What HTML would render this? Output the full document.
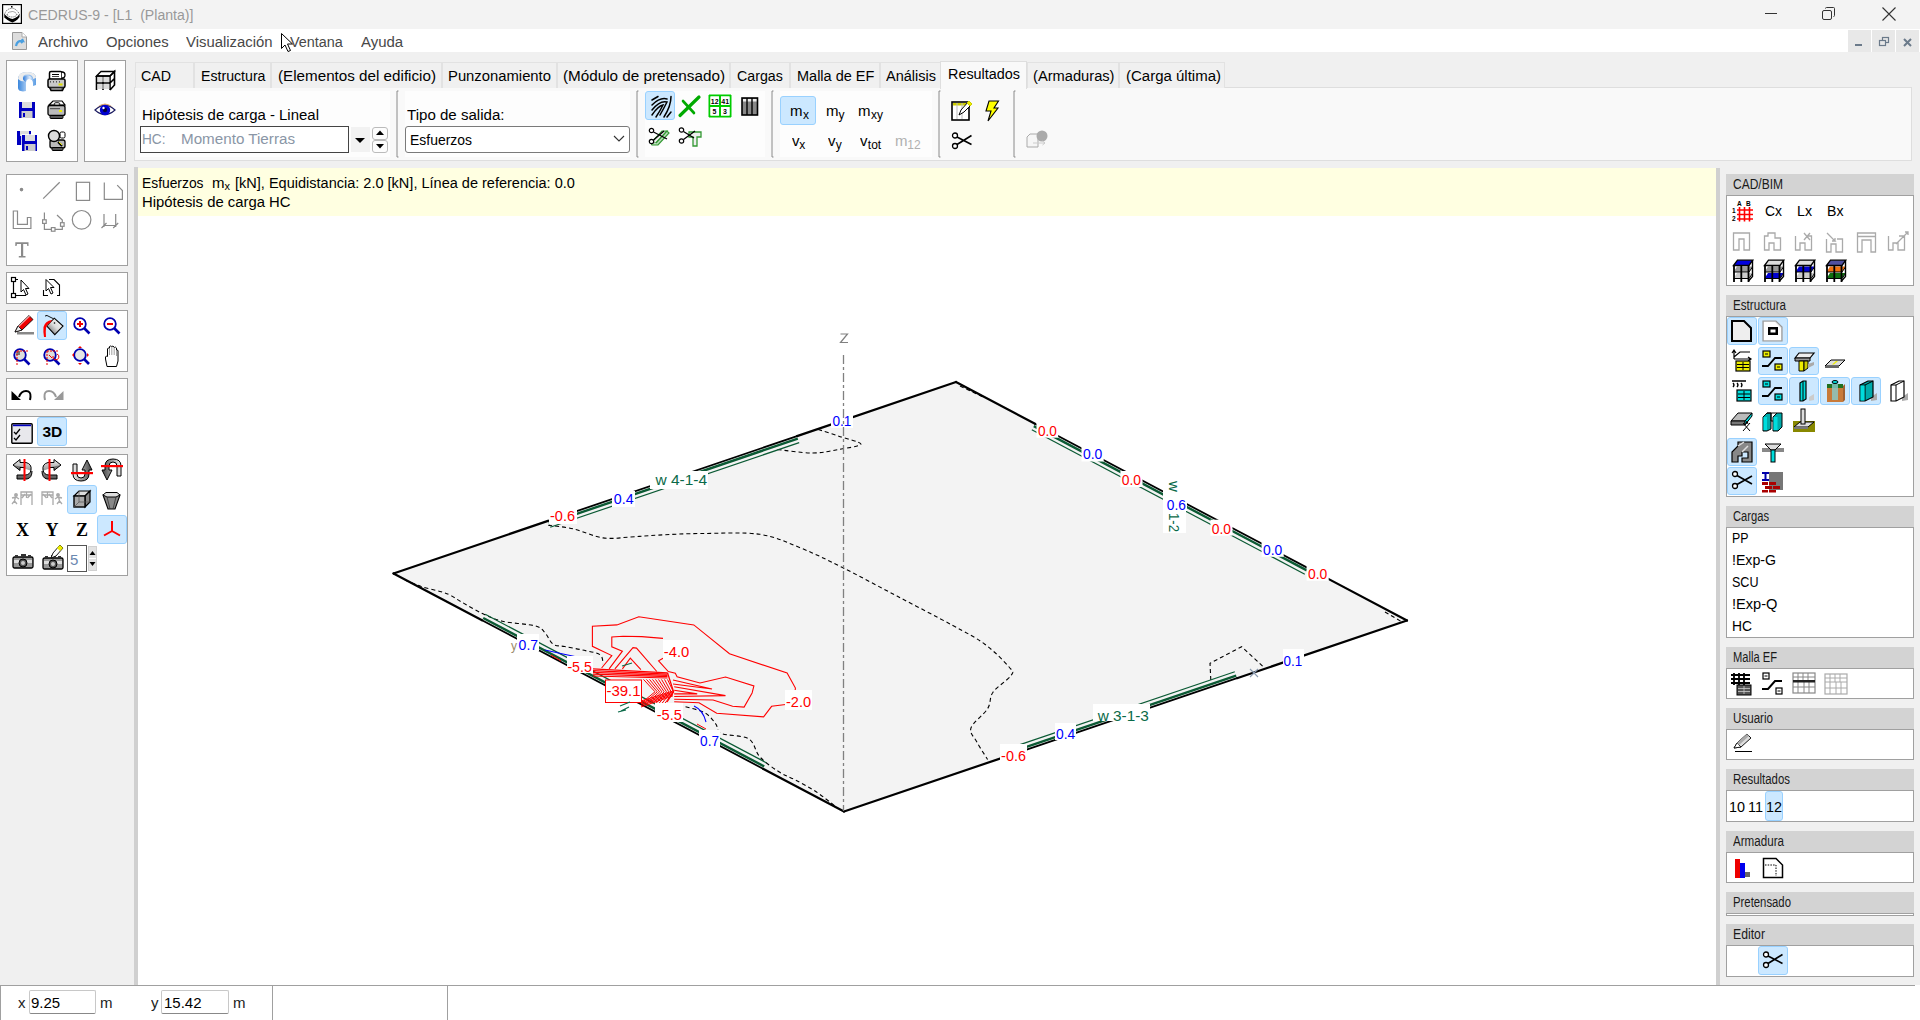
<!DOCTYPE html>
<html><head><meta charset="utf-8">
<style>
*{box-sizing:border-box;margin:0;padding:0}
html,body{width:1920px;height:1020px;overflow:hidden;background:#f0f0f0;font-family:"Liberation Sans",sans-serif;font-size:15px;color:#000}
.a{position:absolute}
.t{position:absolute;white-space:nowrap;line-height:1}
svg{overflow:visible}
</style></head><body>
<div class="a" style="left:0px;top:0px;width:1920px;height:29px;background:#f3f3f3"></div>
<svg class="a" style="left:2px;top:4px;" width="20" height="20" viewBox="0 0 20 20"><rect x="0.6" y="0.6" width="18.8" height="18.8" fill="#fff" stroke="#000" stroke-width="1.2"/>
<path d="M2.3 10 L4.5 12 L6.5 13.5 L8.5 14.5 L10.5 15 L13 14 L15.5 12.5 L17.5 10 L17.5 13 L15.5 15.5 L13.5 17 L10.5 18.5 L8 17.5 L5.5 16 L2.3 13.5 Z" fill="#000"/>
<g fill="none" stroke="#000" stroke-width="0.7" stroke-dasharray="1 1"><path d="M2.5 10.5 Q4 6 7 5 L10 4 Q15 5 17.5 10.5"/><path d="M5 11 Q6 8 8 8 L10.5 7.5 Q14 8 15 11 Q13 13 10 13 Q7 13 5 11Z"/></g>
<rect x="9" y="2" width="1.5" height="1.5" fill="#000"/></svg>
<div class="t" style="left:27.6px;top:6.88px;font-size:15.5px;color:#999;transform:scaleX(0.9104);transform-origin:0 0;">CEDRUS-9 - [L1&nbsp; (Planta)]</div>
<div class="a" style="left:1765px;top:13px;width:12px;height:1px;background:#333"></div>
<svg class="a" style="left:1822px;top:7px;" width="14" height="14" viewBox="0 0 14 14"><rect x="0.5" y="3.5" width="9" height="9" rx="1.5" fill="none" stroke="#333"/><path d="M3.5 1.5 Q3.5 0.5 4.5 0.5 L11.5 0.5 Q12.5 0.5 12.5 1.5 L12.5 8.5 Q12.5 9.5 11.5 9.5" fill="none" stroke="#333"/></svg>
<svg class="a" style="left:1882px;top:7px;" width="14" height="14" viewBox="0 0 14 14"><path d="M0.5 0.5 L13.5 13.5 M13.5 0.5 L0.5 13.5" stroke="#333" stroke-width="1.1"/></svg>
<div class="a" style="left:0px;top:29px;width:1920px;height:23px;background:#fff"></div>
<svg class="a" style="left:12px;top:32px;" width="15" height="18" viewBox="0 0 15 18"><path d="M0.5 0.5 L10 0.5 L14.5 5 L14.5 17.5 L0.5 17.5 Z" fill="#ddd" stroke="#999"/><path d="M10 0.5 L10 5 L14.5 5" fill="#fff" stroke="#aaa"/><path d="M4 14 Q5 8 11 9 L10 7 M11 9 L9 11" stroke="#4a9fe0" stroke-width="2.2" fill="none"/></svg>
<div class="t" style="left:38px;top:33.88px;font-size:15.5px;color:#484848;transform:scaleX(0.9674);transform-origin:0 0;">Archivo</div>
<div class="t" style="left:105.8px;top:33.88px;font-size:15.5px;color:#484848;transform:scaleX(0.9573);transform-origin:0 0;">Opciones</div>
<div class="t" style="left:185.8px;top:33.88px;font-size:15.5px;color:#484848;transform:scaleX(0.9602);transform-origin:0 0;">Visualización</div>
<div class="t" style="left:290.2px;top:33.88px;font-size:15.5px;color:#484848;transform:scaleX(0.9293);transform-origin:0 0;">Ventana</div>
<div class="t" style="left:360.8px;top:33.88px;font-size:15.5px;color:#484848;transform:scaleX(0.9660);transform-origin:0 0;">Ayuda</div>
<svg class="a" style="left:281px;top:33px;" width="13" height="20" viewBox="0 0 13 20"><path d="M0.5 0.5 L0.5 15.5 L4 12 L7 18.5 L9.5 17.5 L6.5 11 L11.5 11 Z" fill="#fff" stroke="#000" stroke-width="1"/></svg>
<div class="a" style="left:1848px;top:30px;width:23px;height:22px;background:#e8e8e8"></div>
<div class="a" style="left:1872px;top:30px;width:23px;height:22px;background:#e8e8e8"></div>
<div class="a" style="left:1896px;top:30px;width:23px;height:22px;background:#e8e8e8"></div>
<svg class="a" style="left:1855px;top:36px;" width="10" height="12" viewBox="0 0 10 12"><rect x="0" y="8" width="7" height="2" fill="#6b7a8a"/></svg>
<svg class="a" style="left:1879px;top:37px;" width="10" height="10" viewBox="0 0 10 10"><rect x="3.5" y="0.5" width="6" height="5" fill="none" stroke="#6b7a8a" stroke-width="1.2"/><rect x="0.5" y="3.5" width="6" height="5" fill="#e8e8e8" stroke="#6b7a8a" stroke-width="1.2"/></svg>
<svg class="a" style="left:1903px;top:38px;" width="9" height="9" viewBox="0 0 9 9"><path d="M1 1 L8 8 M8 1 L1 8" stroke="#6b7a8a" stroke-width="2"/></svg>
<div class="a" style="left:6px;top:60px;width:72px;height:102px;background:#fff;border:1px solid #a0a0a0"></div>
<div class="a" style="left:84px;top:60px;width:42px;height:102px;background:#fff;border:1px solid #a0a0a0"></div>
<svg class="a" style="left:17px;top:70px;" width="20" height="22" viewBox="0 0 20 22"><defs><linearGradient id="gA" x1="0" x2="1"><stop offset="0" stop-color="#2a78d8"/><stop offset="0.45" stop-color="#a8c8f0"/><stop offset="0.7" stop-color="#e0ecfa"/><stop offset="1" stop-color="#8ab8ee"/></linearGradient>
<linearGradient id="gA2" x1="0" x2="1"><stop offset="0" stop-color="#3a86dc"/><stop offset="0.5" stop-color="#b0d0f4"/><stop offset="1" stop-color="#5f9fe4"/></linearGradient></defs>
<path d="M1 10 L1 18 Q1 21 6 21.5 L9 21 L9 13 Q9 9 12 9 Q16 9 16 13 L16 16 L19 15 L19 8 Q19 2 10 2 Q1 2 1 10Z" fill="url(#gA2)"/>
<path d="M1 9 Q1 2 10 2 Q19 2 19 8 L16 9 Q16 4.5 10.5 4.5 Q5 4.5 6 9 Q7 11 9 11.5 Q4 12 1 9Z" fill="#ececec"/>
<path d="M6 8 Q7 5 11 5.5 Q15 6 16 9 L16 13 Q16 9 12 9 Q9 9 9 12 Q6 11 6 8Z" fill="url(#gA)"/></svg>
<svg class="a" style="left:47px;top:70px;" width="20" height="22" viewBox="0 0 20 22"><rect x="2.5" y="1.5" width="12.5" height="8" rx="1.5" fill="#fff" stroke="#000" stroke-width="1.5"/>
<rect x="5" y="4" width="7" height="1" fill="#000"/><rect x="5" y="6" width="7" height="1" fill="#444"/>
<path d="M15 2 Q18 2 18 5 Q18 8 15 8" fill="#fff" stroke="#000" stroke-width="1.3"/>
<rect x="1" y="9" width="17" height="8.5" rx="1.5" fill="#c8c8c8" stroke="#000" stroke-width="1.5"/>
<g fill="#555"><rect x="3" y="11" width="1" height="1.6"/><rect x="6" y="11" width="1" height="1.6"/><rect x="9" y="11" width="1" height="1.6"/><rect x="12" y="11" width="1" height="1.6"/></g><rect x="11.5" y="13.5" width="4" height="2" fill="#dd0"/>
<path d="M2.5 17.5 L4 20.5 L15.5 20.5 L17 17.5" fill="#444" stroke="#000" stroke-width="1.3"/><rect x="4.5" y="18.5" width="10" height="1" fill="#ccc"/></svg>
<svg class="a" style="left:18px;top:101px;" width="18" height="18" viewBox="0 0 18 18"><rect x="1" y="1" width="16" height="16" fill="#0000c0"/><rect x="4" y="1" width="10" height="6" fill="#ddd"/><rect x="3.5" y="10" width="11" height="7" fill="#ccc"/><rect x="5" y="12" width="2" height="4" fill="#0000c0"/></svg>
<svg class="a" style="left:47px;top:100px;" width="20" height="20" viewBox="0 0 20 20"><path d="M2 5 L6 1 L15 1 L18 5 Z" fill="#fff" stroke="#000" stroke-width="1.2"/><ellipse cx="10" cy="4" rx="3" ry="1.5" fill="#ddd" stroke="#000" stroke-width="0.8"/>
<rect x="1" y="5.5" width="17" height="10" rx="2" fill="#bbb" stroke="#000" stroke-width="1.3"/>
<rect x="3" y="8" width="10" height="1.2" fill="#555"/><rect x="12" y="10" width="3" height="2" fill="#ee0"/>
<rect x="3" y="15.5" width="13" height="3" rx="1" fill="#555" stroke="#000"/></svg>
<svg class="a" style="left:16px;top:130px;" width="22" height="22" viewBox="0 0 22 22"><rect x="1" y="1" width="14" height="14" fill="#0000c0"/><rect x="4" y="1" width="9" height="5" fill="#ddd"/><rect x="5.2" y="4.2" width="16.3" height="17.3" fill="#fff"/><rect x="6" y="5" width="15" height="16" fill="#0000c0"/><rect x="9" y="5" width="10" height="6" fill="#ddd"/><rect x="8.5" y="14" width="11" height="7" fill="#ccc"/><rect x="10" y="16" width="2" height="4" fill="#0000c0"/></svg>
<svg class="a" style="left:47px;top:130px;" width="20" height="22" viewBox="0 0 20 22"><rect x="3" y="10" width="15" height="8" rx="2" fill="#bbb" stroke="#000" stroke-width="1.3"/><rect x="5" y="17.5" width="11" height="3" rx="1" fill="#555" stroke="#000"/>
<rect x="13" y="2" width="5" height="6" rx="1.5" fill="#fff" stroke="#000"/>
<circle cx="7" cy="6" r="5.5" fill="#ddd" stroke="#000" stroke-width="1.4"/><path d="M11 12 L15 16" stroke="#000" stroke-width="2"/><path d="M12 12 L15 15" stroke="#ee0" stroke-width="1"/></svg>
<svg class="a" style="left:95px;top:70px;" width="21" height="22" viewBox="0 0 21 22"><path d="M1.5 6 L6 1.5 L19.5 1.5 L15 6 Z" fill="#fff" stroke="#000" stroke-width="1.3"/>
<path d="M1.5 6 L15 6 L15 20 M1.5 6 L1.5 20 M8 6 L8 20 M1.5 13 L15 13 M15 6 L19.5 1.5 L19.5 15 L15 20 M15 13 L19.5 8.5" fill="none" stroke="#000" stroke-width="1.6"/>
<rect x="2.5" y="7" width="12" height="5" fill="#ccc" opacity="0.7"/><rect x="2.5" y="14" width="12" height="5" fill="#ccc" opacity="0.7"/></svg>
<svg class="a" style="left:94px;top:101px;" width="22" height="18" viewBox="0 0 22 18"><path d="M1 9 Q11 -1 21 9 Q11 18 1 9 Z" fill="#fff" stroke="#1a1a60" stroke-width="1.2"/>
<path d="M3 6 Q11 -1 19 6 Q11 2 3 6Z" fill="#d9a36a"/>
<circle cx="11" cy="9" r="5.2" fill="#0000d0"/><circle cx="11" cy="9" r="2.2" fill="#000040"/><circle cx="9.5" cy="7" r="1.2" fill="#fff"/></svg>
<div class="a" style="left:6px;top:174px;width:122px;height:92px;background:#fff;border:1px solid #a0a0a0"></div>
<svg class="a" style="left:6px;top:174px;" width="122" height="92" viewBox="0 0 122 92"><g fill="none" stroke="#8a8a8a" stroke-width="1.2">
<circle cx="15.5" cy="15.6" r="1.2" fill="#8a8a8a"/>
<path d="M37.2 24.6 L53.7 8.3"/>
<rect x="70.4" y="8.3" width="13.2" height="18.1"/>
<path d="M98.3 8.5 L98.3 25.3 L116.4 25.3 L116.4 16.5 L111.2 11.1"/>
<path d="M7.3 37 L7.3 54.5 L24.9 54.5 L24.9 43.5 L21.4 43.5 L21.4 50.3 L11.5 50.3 L11.5 37 Z"/>
<path d="M38.4 38.4 L38.4 55.4 L56.3 55.4 L56.3 46 L51 41"/>
<rect x="36.6" y="45.8" width="3.6" height="3.6" fill="#fff"/><rect x="45.4" y="53.6" width="3.6" height="3.6" fill="#fff"/><rect x="54.5" y="48.7" width="3.6" height="3.6" fill="#fff"/>
<circle cx="75.6" cy="45.8" r="9.3"/>
<path d="M98 40 L98 53 M109.7 40 L109.7 53 M98 51.5 L109.7 51.5 M95.5 54 L100.5 49 M107.2 54 L112.2 49"/>
</g>
<path d="M9.3 68.3 L22.5 68.3 L22.5 72 L21.3 72 L21 70 L17.2 70 L17.2 82 L19.5 82 L19.5 83.6 L12.8 83.6 L12.8 82 L15 82 L15 70 L11 70 L10.5 72 L9.3 72 Z" fill="#8a8a8a"/></svg>
<div class="a" style="left:6px;top:272px;width:122px;height:32px;background:#fff;border:1px solid #a0a0a0"></div>
<svg class="a" style="left:11px;top:277px;" width="22" height="23" viewBox="0 0 22 23"><rect x="0.5" y="0.5" width="4" height="4" fill="#fff" stroke="#000" stroke-width="1.2"/><rect x="0.5" y="16.5" width="4" height="4" fill="#fff" stroke="#000" stroke-width="1.2"/>
<path d="M2.5 4.5 L2.5 16.5 M4.5 18.5 L15 18.5 M4.5 2.5 L7 2.5" stroke="#000" stroke-width="1.2"/>
<path d="M10 3 L10 15 L12.5 12.5 L15 18 L17 17 L14.5 11.5 L18 11.5 Z" fill="#fff" stroke="#000" stroke-width="1"/></svg>
<svg class="a" style="left:43px;top:279px;" width="20" height="18" viewBox="0 0 20 18"><path d="M6 0.5 L11 0.5 L16.5 6 L16.5 16.5 L14 16.5 M0.5 11 L0.5 16.5 L5 16.5" fill="none" stroke="#000" stroke-width="1.1"/>
<path d="M3 0.5 L3 12 L5.5 9.5 L8 15 L10 14 L7.5 8.5 L11 8.5 Z" fill="#fff" stroke="#000" stroke-width="1"/></svg>
<div class="a" style="left:6px;top:310px;width:122px;height:62px;background:#fff;border:1px solid #a0a0a0"></div>
<div class="a" style="left:37px;top:311px;width:30px;height:29px;background:#cce8ff;border:1px solid #99d1ff;border-radius:3px"></div>
<svg class="a" style="left:13px;top:315px;" width="21" height="20" viewBox="0 0 21 20"><path d="M2 17 L5 11 L16 0.5 L20 4.5 L9 15 Z" fill="#e00" stroke="#000" stroke-width="0.8"/><path d="M2 17 L5 11 L9 15 Z" fill="#eee" stroke="#000" stroke-width="0.8"/><path d="M5 11 L16 0.5 L17 1.5 L6 12Z" fill="#fff" opacity="0.6"/>
<rect x="4" y="17" width="17" height="2.5" fill="#888"/></svg>
<svg class="a" style="left:40px;top:314px;" width="26" height="26" viewBox="0 0 26 26"><defs><linearGradient id="gB" x1="0" x2="1" y1="1" y2="0"><stop offset="0" stop-color="#444"/><stop offset="0.5" stop-color="#ddd"/><stop offset="1" stop-color="#fff"/></linearGradient></defs>
<path d="M14.2 4.2 L23 12.1 L14.8 20.6 L6.6 11.8 Z" fill="url(#gB)" stroke="#000" stroke-width="1.1"/>
<path d="M6.6 11.8 Q8 8 10.5 6 L14.2 4.2" fill="none" stroke="#fff" stroke-width="0.5"/>
<path d="M5.7 2.5 Q5 1 7 1.5 L14 5" fill="none" stroke="#000" stroke-width="0.9"/><circle cx="14.5" cy="9" r="0.8" fill="#000"/>
<path d="M12 6 Q5 7 3.5 13 Q3 18 4 23 L6 23 Q5.5 18 6 14 Q7 10 10 9 Z" fill="#f00"/></svg>
<svg class="a" style="left:73px;top:317px;" width="18" height="18" viewBox="0 0 18 18"><circle cx="7" cy="7" r="5.8" fill="#fff" stroke="#0000b0" stroke-width="1.8"/><path d="M11 11 L16.5 16.5" stroke="#0000b0" stroke-width="2.6"/><path d="M4 7 L10 7 M7 4 L7 10" stroke="#e00" stroke-width="2"/></svg>
<svg class="a" style="left:103px;top:317px;" width="18" height="18" viewBox="0 0 18 18"><circle cx="7" cy="7" r="5.8" fill="#fff" stroke="#0000b0" stroke-width="1.8"/><path d="M11 11 L16.5 16.5" stroke="#0000b0" stroke-width="2.6"/><path d="M4 7 L10 7" stroke="#e00" stroke-width="2"/></svg>
<svg class="a" style="left:13px;top:348px;" width="18" height="18" viewBox="0 0 18 18"><circle cx="7" cy="7" r="5.8" fill="#ddd" stroke="#0000b0" stroke-width="1.8"/><path d="M7 7 L7 3 A4 4 0 0 0 3 7Z" fill="#777"/><path d="M11 11 L16.5 16.5" stroke="#0000b0" stroke-width="2.6"/><path d="M4 3 L4 17 M4 3 L16 3" stroke="#e00" stroke-width="1" stroke-dasharray="2 1"/></svg>
<svg class="a" style="left:43px;top:348px;" width="18" height="18" viewBox="0 0 18 18"><circle cx="7" cy="7" r="5.8" fill="#ddd" stroke="#0000b0" stroke-width="1.8"/><path d="M11 11 L16.5 16.5" stroke="#0000b0" stroke-width="2.6"/><path d="M4 3 L4 17 M4 3 L16 3" stroke="#e00" stroke-width="1" stroke-dasharray="2 1"/><path d="M6 7 L9 10 M14 6 A3 3 0 1 1 10 8" stroke="#e00" fill="none"/></svg>
<svg class="a" style="left:72px;top:346px;" width="18" height="20" viewBox="0 0 18 20"><circle cx="8" cy="9" r="5.8" fill="#e6e6e6" stroke="#0000b0" stroke-width="1.8"/><path d="M12 13 L17 18" stroke="#0000b0" stroke-width="2.6"/><path d="M8 0 L10 2 L6 2Z M8 19 L10 17 L6 17Z M0 9 L2 7 L2 11Z M17 9 L15 7 L15 11Z" fill="#e00"/></svg>
<svg class="a" style="left:104px;top:345px;" width="15" height="23" viewBox="0 0 15 23"><path d="M3 21.5 L1.5 14 Q1 11.5 2.5 11 L3.5 11.5 L3.5 4 Q4 2.5 5.5 3 L5.5 1.5 Q6.5 0.5 7.8 1.5 Q9 0.5 10 2 L10.3 2.5 Q11.5 1.5 12.5 3 L12.5 5 Q13.8 4.5 14 6 L14 16 L12.5 21.5 Z" fill="#fff" stroke="#000" stroke-width="1"/>
<path d="M5.5 3 L5.5 10 M7.8 1.5 L7.8 10 M10.2 2.5 L10.2 10 M12.5 5 L12.5 11" stroke="#888" stroke-width="0.8"/></svg>
<div class="a" style="left:6px;top:378px;width:122px;height:32px;background:#fff;border:1px solid #a0a0a0"></div>
<svg class="a" style="left:11px;top:388px;" width="22" height="13" viewBox="0 0 22 13"><path d="M8 9 Q10 3 15 3 Q20 3 19.5 9 L19 12" fill="none" stroke="#000" stroke-width="2"/><path d="M0.5 12 L0.5 3 L10 12 Z" fill="#000"/></svg>
<svg class="a" style="left:42px;top:388px;" width="22" height="13" viewBox="0 0 22 13"><path d="M14 9 Q12 3 7 3 Q2 3 2.5 9 L3 12" fill="none" stroke="#999" stroke-width="2"/><path d="M21.5 12 L21.5 3 L12 12 Z" fill="#999"/></svg>
<div class="a" style="left:6px;top:416px;width:122px;height:32px;background:#fff;border:1px solid #a0a0a0"></div>
<div class="a" style="left:37px;top:417px;width:30px;height:29px;background:#cce8ff;border:1px solid #99d1ff;border-radius:3px"></div>
<svg class="a" style="left:11px;top:423px;" width="22" height="21" viewBox="0 0 22 21"><rect x="0.8" y="0.8" width="20.4" height="19.4" rx="1" fill="#e8e8ec" stroke="#000" stroke-width="1.4"/><rect x="2" y="1.6" width="18" height="1.6" fill="#0000c0"/><path d="M3 9 L5 11 L9 6 M3 15 L5 17 L9 12" fill="none" stroke="#000" stroke-width="1.3"/></svg>
<div class="t" style="left:42.5px;top:424.38px;font-size:15.5px;color:#000;font-weight:bold">3D</div>
<div class="a" style="left:6px;top:454px;width:122px;height:122px;background:#fff;border:1px solid #a0a0a0"></div>
<svg class="a" style="left:12px;top:459px;" width="21" height="22" viewBox="0 0 21 22"><defs><linearGradient id="gR12459" x1="0" x2="0" y1="0" y2="1"><stop offset="0" stop-color="#eee"/><stop offset="1" stop-color="#555"/></linearGradient></defs><g >
<path d="M1 6 L8 0.5 L8 3.5 L14 3.5 Q20 5 19 11 Q18 16 13 16 L5 16 L5 20 L15 20 Q20 19 20 12" fill="url(#gR12459)" stroke="#000" stroke-width="1"/>
<path d="M1 6 L8 11.5 L8 8.5 L13 8.5" fill="#777" stroke="#000" stroke-width="1"/>
<rect x="11.5" y="0" width="2" height="22" fill="#f00"/></g></svg>
<svg class="a" style="left:41px;top:459px;" width="21" height="22" viewBox="0 0 21 22"><defs><linearGradient id="gR41459" x1="0" x2="0" y1="0" y2="1"><stop offset="0" stop-color="#eee"/><stop offset="1" stop-color="#555"/></linearGradient></defs><g transform="translate(21,0) scale(-1,1)">
<path d="M1 6 L8 0.5 L8 3.5 L14 3.5 Q20 5 19 11 Q18 16 13 16 L5 16 L5 20 L15 20 Q20 19 20 12" fill="url(#gR41459)" stroke="#000" stroke-width="1"/>
<path d="M1 6 L8 11.5 L8 8.5 L13 8.5" fill="#777" stroke="#000" stroke-width="1"/>
<rect x="11.5" y="0" width="2" height="22" fill="#f00"/></g></svg>
<svg class="a" style="left:71px;top:459px;" width="22" height="22" viewBox="0 0 22 22"><defs><linearGradient id="gU" x1="0" x2="1"><stop offset="0" stop-color="#eee"/><stop offset="1" stop-color="#444"/></linearGradient></defs>
<path d="M2 5 L6 5 L6 15 Q6 19 10 19 Q14 19 14 15 L14 11 L11 11 L16 1 L21 11 L18 11 L18 15 Q18 22 10 22 Q2 22 2 15 Z" fill="url(#gU)" stroke="#000" stroke-width="1"/>
<rect x="0" y="13" width="22" height="2.2" fill="#f00"/></svg>
<svg class="a" style="left:101px;top:459px;" width="22" height="22" viewBox="0 0 22 22"><defs><linearGradient id="gV" x1="0" x2="1"><stop offset="0" stop-color="#444"/><stop offset="1" stop-color="#eee"/></linearGradient></defs>
<path d="M20 17 L16 17 L16 7 Q16 3 12 3 Q8 3 8 7 L8 11 L11 11 L6 21 L1 11 L4 11 L4 7 Q4 0 12 0 Q20 0 20 7 Z" fill="url(#gV)" stroke="#000" stroke-width="1"/>
<rect x="0" y="6" width="22" height="2.2" fill="#f00"/></svg>
<svg class="a" style="left:11px;top:490px;" width="22" height="16" viewBox="0 0 22 16"><g stroke="#aaa" fill="none" stroke-width="1.3"><path d="M10 15 L10 2 L21 2 L21 15 M10 5 L21 5 M15.5 2 L15.5 8 M11 8 L14 4 M16.5 8 L20 4"/><circle cx="5" cy="5" r="1.3" fill="#aaa"/><path d="M4.5 7 L3.5 11 L1 14 M3.5 11 L6 14 M1 8 L5 7 L8 9"/></g></svg>
<svg class="a" style="left:41px;top:490px;" width="22" height="16" viewBox="0 0 22 16"><g stroke="#aaa" fill="none" stroke-width="1.3" transform="translate(22,0) scale(-1,1)"><path d="M10 15 L10 2 L21 2 L21 15 M10 5 L21 5 M15.5 2 L15.5 8 M11 8 L14 4 M16.5 8 L20 4"/><circle cx="5" cy="5" r="1.3" fill="#aaa"/><path d="M4.5 7 L3.5 11 L1 14 M3.5 11 L6 14 M1 8 L5 7 L8 9"/></g></svg>
<div class="a" style="left:67px;top:485px;width:30px;height:29px;background:#cce8ff;border:1px solid #99d1ff;border-radius:3px"></div>
<svg class="a" style="left:73px;top:490px;" width="18" height="18" viewBox="0 0 18 18"><path d="M1 6 L6 1 L17 1 L12 6 Z" fill="#ddd" stroke="#000" stroke-width="1.2"/><path d="M12 6 L17 1 L17 12 L12 17Z" fill="#888" stroke="#000" stroke-width="1.2"/><rect x="1" y="6" width="11" height="11" fill="#aaa" stroke="#000" stroke-width="1.4"/><path d="M1 17 L6 12 L17 12 M6 12 L6 1" stroke="#555" stroke-width="0.7" fill="none"/></svg>
<svg class="a" style="left:102px;top:492px;" width="19" height="18" viewBox="0 0 19 18"><path d="M1 3 L18 3 L13 17 L6 17 Z" fill="#888" stroke="#000" stroke-width="1.1"/><path d="M1 3 L4 0.5 L15 0.5 L18 3 L14 5 L5 5Z" fill="#ddd" stroke="#000" stroke-width="1"/><path d="M5 5 L8 17 M14 5 L11 17" stroke="#333" stroke-width="0.8"/></svg>
<div class="t" style="left:16px;top:520.76px;font-size:18px;color:#000;font-family:'Liberation Serif',serif;font-weight:bold">X</div>
<div class="t" style="left:45.5px;top:520.76px;font-size:18px;color:#000;font-family:'Liberation Serif',serif;font-weight:bold">Y</div>
<div class="t" style="left:76px;top:520.76px;font-size:18px;color:#000;font-family:'Liberation Serif',serif;font-weight:bold">Z</div>
<div class="a" style="left:97px;top:515px;width:30px;height:29px;background:#cce8ff;border:1px solid #99d1ff;border-radius:3px"></div>
<svg class="a" style="left:103px;top:520px;" width="18" height="18" viewBox="0 0 18 18"><path d="M9 1 L9 11 L1 15.5 M9 11 L17 15.5" stroke="#f00" stroke-width="2" fill="none"/></svg>
<svg class="a" style="left:12px;top:553px;" width="22" height="16" viewBox="0 0 22 16"><rect x="1" y="4" width="20" height="11" rx="1.5" fill="#999" stroke="#000" stroke-width="1.3"/><rect x="3" y="2" width="3" height="2" fill="#333"/><rect x="9" y="1" width="5" height="3" fill="#333"/><rect x="16" y="2" width="3" height="2" fill="#333"/><rect x="2" y="7" width="18" height="3" fill="#ddd"/><circle cx="11" cy="10" r="4" fill="#555" stroke="#000"/><circle cx="11" cy="10" r="2" fill="#ccc"/></svg>
<svg class="a" style="left:42px;top:554px;" width="22" height="16" viewBox="0 0 22 16"><rect x="1" y="4" width="20" height="11" rx="1.5" fill="#999" stroke="#000" stroke-width="1.3"/><rect x="3" y="2" width="3" height="2" fill="#333"/><rect x="9" y="1" width="5" height="3" fill="#333"/><rect x="16" y="2" width="3" height="2" fill="#333"/><rect x="2" y="7" width="18" height="3" fill="#ddd"/><circle cx="11" cy="10" r="4" fill="#555" stroke="#000"/><circle cx="11" cy="10" r="2" fill="#ccc"/></svg>
<svg class="a" style="left:49px;top:544px;" width="14" height="16" viewBox="0 0 14 16"><path d="M2 14 L4 9 L11 1 L14 4 L7 12 Z" fill="#fff" stroke="#000" stroke-width="0.9"/><path d="M8 4 L11 1 L14 4 L11 7Z" fill="#ee0"/></svg>
<div class="a" style="left:67px;top:545px;width:20px;height:27px;background:#fff;border:1px solid #555"></div>
<div class="t" style="left:70px;top:551.88px;font-size:15.5px;color:#6a88b0;transform:scaleX(0.9674);transform-origin:0 0;">5</div>
<div class="a" style="left:88px;top:546px;width:9px;height:25px;background:#e2e2e2;border:1px solid #d0d0d0"></div>
<svg class="a" style="left:88px;top:546px;" width="9" height="25" viewBox="0 0 9 25"><path d="M1.5 9 L4.5 5 L7.5 9Z M1.5 16 L4.5 20 L7.5 16Z" fill="#000"/><path d="M1 12.5 L8 12.5" stroke="#fff"/></svg>
<div class="a" style="left:134px;top:167px;width:4px;height:818px;background:#d0d0d0"></div>
<div class="a" style="left:134px;top:87px;width:1778px;height:74px;background:#f9f9f9;border:1px solid #dedede"></div>
<div class="a" style="left:135px;top:62px;width:59px;height:26px;background:#f0f0f0;border:1px solid #e2e2e2;border-bottom:none"></div>
<div class="t" style="left:141px;top:67.88px;font-size:15.5px;color:#000;transform:scaleX(0.9169);transform-origin:0 0;">CAD</div>
<div class="a" style="left:194px;top:62px;width:77px;height:26px;background:#f0f0f0;border:1px solid #e2e2e2;border-bottom:none"></div>
<div class="t" style="left:201.2px;top:67.88px;font-size:15.5px;color:#000;transform:scaleX(0.9129);transform-origin:0 0;">Estructura</div>
<div class="a" style="left:271px;top:62px;width:170.5px;height:26px;background:#f0f0f0;border:1px solid #e2e2e2;border-bottom:none"></div>
<div class="t" style="left:278px;top:67.88px;font-size:15.5px;color:#000;transform:scaleX(0.9806);transform-origin:0 0;">(Elementos del edificio)</div>
<div class="a" style="left:441.5px;top:62px;width:115.0px;height:26px;background:#f0f0f0;border:1px solid #e2e2e2;border-bottom:none"></div>
<div class="t" style="left:447.8px;top:67.88px;font-size:15.5px;color:#000;transform:scaleX(0.9559);transform-origin:0 0;">Punzonamiento</div>
<div class="a" style="left:556.5px;top:62px;width:173.5px;height:26px;background:#f0f0f0;border:1px solid #e2e2e2;border-bottom:none"></div>
<div class="t" style="left:563px;top:67.88px;font-size:15.5px;color:#000;transform:scaleX(0.9841);transform-origin:0 0;">(Módulo de pretensado)</div>
<div class="a" style="left:730px;top:62px;width:60px;height:26px;background:#f0f0f0;border:1px solid #e2e2e2;border-bottom:none"></div>
<div class="t" style="left:736.8px;top:67.88px;font-size:15.5px;color:#000;transform:scaleX(0.9166);transform-origin:0 0;">Cargas</div>
<div class="a" style="left:790px;top:62px;width:89.5px;height:26px;background:#f0f0f0;border:1px solid #e2e2e2;border-bottom:none"></div>
<div class="t" style="left:796.5px;top:67.88px;font-size:15.5px;color:#000;transform:scaleX(0.9357);transform-origin:0 0;">Malla de EF</div>
<div class="a" style="left:879.5px;top:62px;width:61.0px;height:26px;background:#f0f0f0;border:1px solid #e2e2e2;border-bottom:none"></div>
<div class="t" style="left:886.2px;top:67.88px;font-size:15.5px;color:#000;transform:scaleX(0.9362);transform-origin:0 0;">Análisis</div>
<div class="a" style="left:1027px;top:62px;width:92px;height:26px;background:#f0f0f0;border:1px solid #e2e2e2;border-bottom:none"></div>
<div class="t" style="left:1032.5px;top:67.88px;font-size:15.5px;color:#000;transform:scaleX(0.9463);transform-origin:0 0;">(Armaduras)</div>
<div class="a" style="left:1119px;top:62px;width:105.5px;height:26px;background:#f0f0f0;border:1px solid #e2e2e2;border-bottom:none"></div>
<div class="t" style="left:1126px;top:67.88px;font-size:15.5px;color:#000;transform:scaleX(0.9675);transform-origin:0 0;">(Carga última)</div>
<div class="a" style="left:940px;top:61px;width:87px;height:28px;background:#f9f9f9;border:1px solid #dedede;border-bottom:none"></div>
<div class="t" style="left:948px;top:66.48px;font-size:15.5px;color:#000;transform:scaleX(0.9283);transform-origin:0 0;">Resultados</div>
<div class="a" style="left:140px;top:91px;width:250px;height:66px;background:#fdfdfd"></div>
<div class="a" style="left:405px;top:91px;width:225px;height:66px;background:#fdfdfd"></div>
<div class="a" style="left:645px;top:91px;width:119.5px;height:66px;background:#fdfdfd"></div>
<div class="a" style="left:780px;top:91px;width:152px;height:66px;background:#fdfdfd"></div>
<svg class="a" style="left:395.5px;top:90px;" width="4" height="68" viewBox="0 0 4 68"><path d="M2.5 1 L1 1 L1 67 L2.5 67" fill="none" stroke="#8a8a8a" stroke-width="1"/></svg>
<svg class="a" style="left:635.5px;top:90px;" width="4" height="68" viewBox="0 0 4 68"><path d="M2.5 1 L1 1 L1 67 L2.5 67" fill="none" stroke="#8a8a8a" stroke-width="1"/></svg>
<svg class="a" style="left:770.5px;top:90px;" width="4" height="68" viewBox="0 0 4 68"><path d="M2.5 1 L1 1 L1 67 L2.5 67" fill="none" stroke="#8a8a8a" stroke-width="1"/></svg>
<svg class="a" style="left:937.5px;top:90px;" width="4" height="68" viewBox="0 0 4 68"><path d="M2.5 1 L1 1 L1 67 L2.5 67" fill="none" stroke="#8a8a8a" stroke-width="1"/></svg>
<svg class="a" style="left:1012.5px;top:90px;" width="4" height="68" viewBox="0 0 4 68"><path d="M2.5 1 L1 1 L1 67 L2.5 67" fill="none" stroke="#8a8a8a" stroke-width="1"/></svg>
<div class="t" style="left:141.5px;top:106.88px;font-size:15.5px;color:#000;transform:scaleX(0.9642);transform-origin:0 0;">Hipótesis de carga - Lineal</div>
<div class="a" style="left:140px;top:126px;width:209px;height:27px;background:#fff;border:1px solid #444"></div>
<div class="t" style="left:142.3px;top:131.38px;font-size:15.5px;color:#8a96a6;transform:scaleX(0.8806);transform-origin:0 0;">HC:</div>
<div class="t" style="left:181px;top:131.38px;font-size:15.5px;color:#8a96a6;transform:scaleX(0.9802);transform-origin:0 0;">Momento Tierras</div>
<div class="a" style="left:351px;top:127px;width:19px;height:25px;background:#f2f2f2"></div>
<svg class="a" style="left:355px;top:138px;" width="10" height="6" viewBox="0 0 10 6"><path d="M0 0 L10 0 L5 5Z" fill="#000"/></svg>
<div class="a" style="left:371.5px;top:126.5px;width:16px;height:13px;background:#fdfdfd;border:1px solid #bbb;border-radius:3px"></div>
<div class="a" style="left:371.5px;top:140px;width:16px;height:13px;background:#fdfdfd;border:1px solid #bbb;border-radius:3px"></div>
<svg class="a" style="left:375px;top:129px;" width="10" height="7" viewBox="0 0 10 7"><path d="M1 6 L5 1.5 L9 6Z" fill="#000"/></svg>
<svg class="a" style="left:375px;top:143px;" width="10" height="7" viewBox="0 0 10 7"><path d="M1 1 L5 5.5 L9 1Z" fill="#000"/></svg>
<div class="t" style="left:407px;top:106.88px;font-size:15.5px;color:#000;transform:scaleX(0.9724);transform-origin:0 0;">Tipo de salida:</div>
<div class="a" style="left:405px;top:126px;width:225px;height:27px;background:#fff;border:1px solid #7a7a7a;border-radius:3px"></div>
<div class="t" style="left:410.3px;top:131.88px;font-size:15.5px;color:#000;transform:scaleX(0.8994);transform-origin:0 0;">Esfuerzos</div>
<svg class="a" style="left:613px;top:135px;" width="12" height="8" viewBox="0 0 12 8"><path d="M1 1 L6 6 L11 1" fill="none" stroke="#333" stroke-width="1.1"/></svg>
<div class="a" style="left:645px;top:91px;width:30px;height:29px;background:#cce8ff;border:1px solid #99d1ff;border-radius:3px"></div>
<svg class="a" style="left:648px;top:94px;" width="25" height="25" viewBox="0 0 25 25"><g fill="none" stroke="#000" stroke-width="1.5" stroke-linecap="round">
<path d="M4 6 L10 2.5"/><path d="M4 11 Q12 3 19 5"/><path d="M4 16 Q12 6 19 8 Q16 14 12 21"/>
<path d="M4 21 Q10 12 15 11 Q12 17 8 23"/><path d="M23 2.5 Q23 12 16 23"/><path d="M19 23 L23 18"/></g></svg>
<svg class="a" style="left:678px;top:95px;" width="23" height="22" viewBox="0 0 23 22"><path d="M2 20.5 L21 2" stroke="#0a0" stroke-width="3.2" stroke-linecap="round"/><path d="M5 6 L16 18" stroke="#0a0" stroke-width="2.6" stroke-linecap="round"/></svg>
<svg class="a" style="left:708px;top:94px;" width="24" height="24" viewBox="0 0 24 24"><g stroke="#0c0" stroke-width="2"><path d="M1 1.5 L23 1.5 M1 12 L23 12 M1 22.5 L23 22.5 M1.5 1 L1.5 23 M12 1 L12 23 M22.5 1 L22.5 23"/></g>
<rect x="2.5" y="2.5" width="8.5" height="8.5" fill="#fff"/><rect x="13" y="2.5" width="8.5" height="8.5" fill="#fff"/><rect x="2.5" y="13" width="8.5" height="8.5" fill="#fff"/><rect x="13" y="13" width="8.5" height="8.5" fill="#fff"/>
<g font-family="Liberation Sans" font-weight="bold" font-size="7" fill="#000"><text x="2.8" y="9.5">12</text><text x="13.3" y="9.5">41</text><text x="4.5" y="20">5</text><text x="15" y="20">3</text></g></svg>
<svg class="a" style="left:741px;top:97px;" width="18" height="19" viewBox="0 0 18 19"><rect x="1" y="1" width="15.5" height="17" fill="#888" stroke="#000" stroke-width="1.6"/><rect x="2" y="2" width="13.5" height="2.5" fill="#eee"/><path d="M6 1 L6 18 M11 1 L11 18" stroke="#000" stroke-width="1.4"/></svg>
<svg class="a" style="left:648px;top:127px;" width="25" height="22" viewBox="0 0 25 22"><path d="M3 16 L14 4 L19 4 L8 16 Z" fill="#eee" stroke="#393" stroke-width="1.2"/><path d="M8 16 L19 4 L21 6 L10 18 L4 18 L3 16" fill="#bdb" stroke="#393" stroke-width="1.2"/>
<circle cx="3.5" cy="3.5" r="2.2" fill="#fff" stroke="#000" stroke-width="1.2"/><circle cx="3.5" cy="14.5" r="2.2" fill="#fff" stroke="#000" stroke-width="1.2"/>
<path d="M5.5 5 L19 12 M5.5 13 L16 4" stroke="#000" stroke-width="1.3"/></svg>
<svg class="a" style="left:678px;top:127px;" width="25" height="21" viewBox="0 0 25 21"><path d="M11 5 L23 5 L23 10 L19 10 L19 19 L15 19 L15 10 L11 10 Z" fill="#eee" stroke="#393" stroke-width="1.3"/>
<circle cx="3.5" cy="3" r="2.2" fill="#fff" stroke="#000" stroke-width="1.2"/><circle cx="3.5" cy="14" r="2.2" fill="#fff" stroke="#000" stroke-width="1.2"/>
<path d="M5.5 4.5 L16 11 M5.5 12.5 L17 4" stroke="#000" stroke-width="1.3"/></svg>
<div class="a" style="left:780px;top:96px;width:36px;height:29px;background:#cce8ff;border:1px solid #99d1ff;border-radius:3px"></div>
<div class="t" style="left:790.3px;top:102.68px;font-size:15.5px;color:#000;transform:scaleX(0.9685);transform-origin:0 0;">m</div>
<div class="t" style="left:803.0999999999999px;top:108.64px;font-size:12px;color:#000;">x</div>
<div class="t" style="left:825.6px;top:102.68px;font-size:15.5px;color:#000;transform:scaleX(0.9685);transform-origin:0 0;">m</div>
<div class="t" style="left:838.4px;top:108.64px;font-size:12px;color:#000;">y</div>
<div class="t" style="left:858.3px;top:102.68px;font-size:15.5px;color:#000;transform:scaleX(0.9685);transform-origin:0 0;">m</div>
<div class="t" style="left:871.0999999999999px;top:108.64px;font-size:12px;color:#000;">xy</div>
<div class="t" style="left:791.5px;top:132.68px;font-size:15.5px;color:#000;transform:scaleX(0.9677);transform-origin:0 0;">v</div>
<div class="t" style="left:799.3px;top:138.64px;font-size:12px;color:#000;">x</div>
<div class="t" style="left:828px;top:132.68px;font-size:15.5px;color:#000;transform:scaleX(0.9677);transform-origin:0 0;">v</div>
<div class="t" style="left:835.8px;top:138.64px;font-size:12px;color:#000;">y</div>
<div class="t" style="left:860px;top:132.68px;font-size:15.5px;color:#000;transform:scaleX(0.9677);transform-origin:0 0;">v</div>
<div class="t" style="left:867.8px;top:138.64px;font-size:12px;color:#000;">tot</div>
<div class="t" style="left:894.5px;top:132.68px;font-size:15.5px;color:#b0b0b0;transform:scaleX(0.9685);transform-origin:0 0;">m</div>
<div class="t" style="left:907.3px;top:138.64px;font-size:12px;color:#b0b0b0;">12</div>
<svg class="a" style="left:951px;top:98px;" width="23" height="24" viewBox="0 0 23 24"><rect x="1" y="4" width="17" height="18" fill="#fff" stroke="#000" stroke-width="1.6"/><rect x="2" y="5" width="15" height="2.5" fill="#cc0"/>
<path d="M6 5 L6 21 M11 5 L11 21" stroke="#bbb" stroke-width="1"/><path d="M8 17 L10 12 L18 3 L21 6 L13 14Z" fill="#fff" stroke="#000" stroke-width="1"/><path d="M16 5 L18 3 L21 6 L19 8Z" fill="#ee0" stroke="#cc0"/></svg>
<svg class="a" style="left:984px;top:100px;" width="16" height="22" viewBox="0 0 16 22"><path d="M5 1 L14.5 1 L10 8 L14 8 L4 21 L7 11 L2 11 Z" fill="#ff0" stroke="#000" stroke-width="1.1"/></svg>
<svg class="a" style="left:951px;top:132px;" width="22" height="18" viewBox="0 0 22 18"><circle cx="4" cy="3.5" r="2.5" fill="#fff" stroke="#000" stroke-width="1.3"/><circle cx="4" cy="14" r="2.5" fill="#fff" stroke="#000" stroke-width="1.3"/><path d="M6 5 L20.5 12.5 M6 12.5 L20.5 3.5" stroke="#000" stroke-width="1.6"/></svg>
<svg class="a" style="left:1026px;top:130px;" width="23" height="22" viewBox="0 0 23 22"><path d="M1 7 L4 4 L12 4 L12 17 L1 17 Z" fill="#f6f6f6" stroke="#aaa" stroke-width="1"/><circle cx="16" cy="6" r="5.5" fill="#aaa"/><path d="M7 13 L19 13 M16.5 11 L19 13 L16.5 15" stroke="#ccc" fill="none"/></svg>
<div class="a" style="left:138px;top:168px;width:1578px;height:817px;background:#fff"></div>
<div class="a" style="left:138px;top:168px;width:1578px;height:48px;background:#ffffe1"></div>
<div class="a" style="left:1716px;top:168px;width:4px;height:817px;background:#d0d0d0"></div>
<div class="t" style="left:142.2px;top:174.88px;font-size:15.5px;color:#000;transform:scaleX(0.8921);transform-origin:0 0;">Esfuerzos</div>
<div class="t" style="left:212px;top:174.88px;font-size:15.5px;color:#000;transform:scaleX(0.9685);transform-origin:0 0;">m</div>
<div class="t" style="left:224.5px;top:181.49px;font-size:11px;color:#000;">x</div>
<div class="t" style="left:235.3px;top:174.88px;font-size:15.5px;color:#000;transform:scaleX(0.9369);transform-origin:0 0;">[kN], Equidistancia: 2.0 [kN], Línea de referencia: 0.0</div>
<div class="t" style="left:142.2px;top:194.48px;font-size:15.5px;color:#000;transform:scaleX(0.9575);transform-origin:0 0;">Hipótesis de carga HC</div>
<svg class="a" style="left:0px;top:0px;" width="1920" height="1020" viewBox="0 0 1920 1020"><polygon points="393.5,573.5 956.0,382.0 1407.0,620.5 844.0,811.5" fill="#f3f3f3"/><path d="M840.5 334 L847.5 334 L840.5 342.5 L848 342.5" fill="none" stroke="#808080" stroke-width="1.2"/><path d="M548.2 525.3 C552.3 525.9 563.9 526.7 573.0 528.8 C582.1 530.9 593.4 536.5 603.0 537.9 C612.6 539.3 621.4 537.5 630.6 537.0 C639.8 536.5 646.1 535.7 658.0 535.1 C669.9 534.5 685.0 533.6 702.0 533.5 C719.0 533.4 743.2 531.9 759.7 534.3 C776.2 536.7 787.1 542.5 800.8 548.0 C814.5 553.5 826.0 559.3 842.0 567.3 C858.0 575.3 878.7 586.5 897.0 596.1 C915.3 605.7 937.3 617.0 951.9 625.0 C966.5 633.0 975.2 637.1 984.8 644.2 C994.4 651.3 1005.1 662.2 1009.5 667.5 C1013.9 672.8 1013.6 671.6 1010.9 675.7 C1008.1 679.8 996.9 686.7 993.0 692.2 C989.1 697.7 991.3 702.8 987.6 708.7 C983.9 714.7 972.8 722.4 971.0 727.9 C969.2 733.4 973.8 736.3 976.6 741.6 C979.4 746.9 985.8 756.5 987.6 759.5" fill="none" stroke="#000" stroke-width="1.1" stroke-dasharray="4 3"/><path d="M405.0 580.0 C407.7 581.1 415.2 584.5 421.2 586.5 C427.2 588.5 436.3 590.3 441.2 591.8 C446.1 593.3 447.3 593.6 450.6 595.3 C453.9 597.0 455.9 598.8 461.2 601.8 C466.5 604.8 475.5 610.3 482.4 613.5 C489.3 616.7 493.6 619.1 502.4 621.2 C511.2 623.3 528.2 624.0 535.3 625.9 C542.3 627.8 541.8 629.4 544.7 632.4 C547.7 635.4 549.7 641.8 553.0 644.1 C556.3 646.5 559.8 645.5 564.7 646.5 C569.6 647.5 576.5 648.6 582.4 650.0 C588.3 651.4 596.6 652.4 600.0 654.7 C603.4 657.0 602.5 662.5 603.0 664.0" fill="none" stroke="#000" stroke-width="1.1" stroke-dasharray="4 3"/><path d="M672.0 704.0 C673.8 704.3 677.3 704.5 682.8 706.0 C688.2 707.5 699.2 709.8 704.7 712.8 C710.2 715.8 713.0 720.4 715.7 723.8 C718.5 727.2 715.7 730.9 721.2 733.4 C726.7 735.9 742.3 735.0 748.7 738.9 C755.1 742.8 754.7 751.2 759.7 756.7 C764.7 762.2 773.0 767.9 778.9 771.8 C784.8 775.7 789.3 776.8 795.3 780.0 C801.3 783.2 808.4 786.7 815.0 791.0 C821.6 795.3 831.7 803.5 835.0 806.0" fill="none" stroke="#000" stroke-width="1.1" stroke-dasharray="4 3"/><path d="M818.2 429.4 C821.6 430.5 831.7 433.8 838.8 436.2 C845.9 438.6 860.9 441.9 860.9 444.1 C860.9 446.3 846.9 447.9 838.8 449.4 C830.7 450.9 822.7 453.0 812.4 453.0 C802.1 453.0 782.9 450.0 777.0 449.4" fill="none" stroke="#000" stroke-width="1.1" stroke-dasharray="4 3"/><polyline points="1210.8,680.0 1210.0,663.3 1241.7,646.7 1263.3,666.7" fill="none" stroke="#000" stroke-width="1.1" stroke-dasharray="4 3"/><polyline points="960,386 985,398" fill="none" stroke="#000" stroke-width="1.1" stroke-dasharray="4 3"/><polyline points="1385,612 1402,622" fill="none" stroke="#000" stroke-width="1.1" stroke-dasharray="4 3"/><line x1="393.5" y1="573.5" x2="548.0" y2="520.9" stroke="#000" stroke-width="2.2" stroke-linecap="round"/><line x1="548.0" y1="520.9" x2="797.0" y2="436.1" stroke="#000" stroke-width="1.8" stroke-linecap="round"/><line x1="797.0" y1="436.1" x2="956.0" y2="382.0" stroke="#000" stroke-width="2.2" stroke-linecap="round"/><line x1="956.0" y1="382.0" x2="1035.0" y2="423.8" stroke="#000" stroke-width="2.2" stroke-linecap="round"/><line x1="1035.0" y1="423.8" x2="1308.0" y2="568.1" stroke="#000" stroke-width="1.8" stroke-linecap="round"/><line x1="1308.0" y1="568.1" x2="1407.0" y2="620.5" stroke="#000" stroke-width="2.2" stroke-linecap="round"/><line x1="844.0" y1="811.5" x2="1020.0" y2="751.8" stroke="#000" stroke-width="2.2" stroke-linecap="round"/><line x1="1020.0" y1="751.8" x2="1237.0" y2="678.2" stroke="#000" stroke-width="1.8" stroke-linecap="round"/><line x1="1237.0" y1="678.2" x2="1407.0" y2="620.5" stroke="#000" stroke-width="2.2" stroke-linecap="round"/><line x1="393.5" y1="573.5" x2="482.0" y2="620.3" stroke="#000" stroke-width="2.2" stroke-linecap="round"/><line x1="482.0" y1="620.3" x2="763.0" y2="768.7" stroke="#000" stroke-width="1.8" stroke-linecap="round"/><line x1="763.0" y1="768.7" x2="844.0" y2="811.5" stroke="#000" stroke-width="2.2" stroke-linecap="round"/><polygon points="393.5,573.5 956.0,382.0 1407.0,620.5 844.0,811.5" fill="none" stroke="#000" stroke-width="0.01"/><line x1="548.8" y1="523.4" x2="797.8" y2="438.6" stroke="#0b5a34" stroke-width="2.4"/><line x1="550.2" y1="527.3" x2="799.2" y2="442.6" stroke="#0b5a34" stroke-width="1.2"/><line x1="1033.8" y1="426.1" x2="1306.8" y2="570.4" stroke="#0b5a34" stroke-width="2.4"/><line x1="1031.8" y1="429.8" x2="1304.8" y2="574.2" stroke="#0b5a34" stroke-width="1.2"/><line x1="1019.2" y1="749.3" x2="1236.2" y2="675.7" stroke="#0b5a34" stroke-width="2.4"/><line x1="1017.8" y1="745.4" x2="1234.8" y2="671.7" stroke="#0b5a34" stroke-width="1.2"/><line x1="483.2" y1="618.0" x2="764.2" y2="766.4" stroke="#0b5a34" stroke-width="2.4"/><line x1="485.2" y1="614.2" x2="766.2" y2="762.7" stroke="#0b5a34" stroke-width="1.2"/><polyline points="601.6,668.0 611.8,655.6 592.4,646.3 592.4,626.3 616.9,624.9 638.8,616.7 693.8,624.9 729.5,653.8 787.1,673.0 795.4,688.1 795.0,692.0" fill="none" stroke="#f00" stroke-width="1.1"/><polyline points="790.0,704.5 785.7,704.5 771.6,706.3 763.6,716.9 716.7,713.3 699.0,702.7 674.2,701.8" fill="none" stroke="#f00" stroke-width="1.1"/><polyline points="609.1,668.8 622.4,651.2 611.8,646.8 611.8,637.0 623.2,636.2 641.8,636.6 663.0,638.4" fill="none" stroke="#f00" stroke-width="1.1"/><polyline points="663.0,658.2 658.6,660.9 668.3,671.5 675.3,673.2 677.1,676.8 700.0,683.0 725.5,677.0 753.9,685.9 752.1,693.0 744.1,707.1 732.6,706.2 713.1,700.0 674.2,699.2" fill="none" stroke="#f00" stroke-width="1.1"/><polyline points="614.9,668.8 633.0,647.7 636.5,648.1 656.8,671.5" fill="none" stroke="#f00" stroke-width="1.1"/><polyline points="622.4,668.8 630.3,658.2 640.9,669.7" fill="none" stroke="#f00" stroke-width="1.1"/><polyline points="674.2,686.8 725.5,695.6 674.2,696.5" fill="none" stroke="#f00" stroke-width="1.1"/><polyline points="674.2,690.3 697.2,693.9 674.2,693.9" fill="none" stroke="#f00" stroke-width="1.1"/><polyline points="673.0,680.0 712.0,689.0 673.0,684.0" fill="none" stroke="#f00" stroke-width="1.1"/><line x1="593" y1="668.8" x2="667.5" y2="672.8" stroke="#f00" stroke-width="1.25"/><line x1="593" y1="670.6" x2="667.5" y2="674.1" stroke="#f00" stroke-width="1.25"/><line x1="593" y1="672.4" x2="667.5" y2="675.4" stroke="#f00" stroke-width="1.25"/><line x1="593" y1="674.2" x2="667.5" y2="676.7" stroke="#f00" stroke-width="1.25"/><line x1="593" y1="676.0" x2="667.5" y2="678.0" stroke="#f00" stroke-width="1.25"/><polyline points="643.5,679.4 655.0,691.8 641.0,703.3" fill="none" stroke="#f00" stroke-width="1"/><polyline points="646.5,679.4 657.3,691.8 644.0,703.3" fill="none" stroke="#f00" stroke-width="1"/><polyline points="649.5,679.4 659.6,691.8 647.0,703.3" fill="none" stroke="#f00" stroke-width="1"/><polyline points="652.5,679.4 661.9,691.8 650.0,703.3" fill="none" stroke="#f00" stroke-width="1"/><polyline points="655.5,679.4 664.2,691.8 653.0,703.3" fill="none" stroke="#f00" stroke-width="1"/><polyline points="658.5,679.4 666.5,691.8 656.0,703.3" fill="none" stroke="#f00" stroke-width="1"/><polyline points="661.5,679.4 668.8,691.8 659.0,703.3" fill="none" stroke="#f00" stroke-width="1"/><polyline points="664.5,679.4 671.1,691.8 662.0,703.3" fill="none" stroke="#f00" stroke-width="1"/><polyline points="667.5,679.4 673.4,691.8 665.0,703.3" fill="none" stroke="#f00" stroke-width="1"/><line x1="641" y1="701.0" x2="673" y2="691.0" stroke="#f00" stroke-width="1"/><line x1="641" y1="702.5" x2="673" y2="692.2" stroke="#f00" stroke-width="1"/><line x1="641" y1="704.0" x2="673" y2="693.4" stroke="#f00" stroke-width="1"/><line x1="641" y1="705.5" x2="673" y2="694.6" stroke="#f00" stroke-width="1"/><line x1="641" y1="707.0" x2="673" y2="695.8" stroke="#f00" stroke-width="1"/><polyline points="667.5,672.8 673.6,691.8 667,702" fill="none" stroke="#f00" stroke-width="1.3"/><polyline points="545,650 563,654 582,658" fill="none" stroke="#00f" stroke-width="1.1"/><path d="M694 706 Q703 710 706 722" fill="none" stroke="#00f" stroke-width="1.1"/><line x1="551" y1="655" x2="561" y2="661" stroke="#f00" stroke-width="1"/><line x1="697" y1="724" x2="706" y2="729" stroke="#f00" stroke-width="1"/><rect x="549" y="508" width="28" height="16" fill="#fff" /><text x="550.0" y="521.1999999999999" font-family="Liberation Sans" font-size="15.5" fill="#f00" textLength="25.1" lengthAdjust="spacingAndGlyphs">-0.6</text><rect x="612" y="491" width="23" height="16" fill="#fff" /><text x="613.8" y="504.40000000000003" font-family="Liberation Sans" font-size="15.5" fill="#00f" textLength="19.8" lengthAdjust="spacingAndGlyphs">0.4</text><rect x="650" y="471" width="58" height="18" fill="#fff" /><text x="655.4" y="485.40000000000003" font-family="Liberation Sans" font-size="15.5" fill="#0a6a48" textLength="51.7" lengthAdjust="spacingAndGlyphs">w 4-1-4</text><rect x="831" y="412" width="22" height="16" fill="#fff" /><text x="832.4" y="425.8" font-family="Liberation Sans" font-size="15.5" fill="#00f" textLength="19.0" lengthAdjust="spacingAndGlyphs">0.1</text><rect x="1036.5" y="421.7" width="21.700000000000045" height="16" fill="#fff" /><text x="1037.9" y="435.5" font-family="Liberation Sans" font-size="15.5" fill="#f00" textLength="18.9" lengthAdjust="spacingAndGlyphs">0.0</text><rect x="1081.5" y="445.5" width="22.200000000000045" height="16" fill="#fff" /><text x="1082.9" y="459.3" font-family="Liberation Sans" font-size="15.5" fill="#00f" textLength="19.4" lengthAdjust="spacingAndGlyphs">0.0</text><rect x="1120.4" y="471" width="22.09999999999991" height="16" fill="#fff" /><text x="1121.8000000000002" y="484.8" font-family="Liberation Sans" font-size="15.5" fill="#f00" textLength="19.3" lengthAdjust="spacingAndGlyphs">0.0</text><rect x="1210.4" y="519.7" width="22.09999999999991" height="16" fill="#fff" /><text x="1211.8000000000002" y="533.5" font-family="Liberation Sans" font-size="15.5" fill="#f00" textLength="19.3" lengthAdjust="spacingAndGlyphs">0.0</text><rect x="1261.6" y="540.8" width="22.100000000000136" height="16" fill="#fff" /><text x="1263.0" y="554.5999999999999" font-family="Liberation Sans" font-size="15.5" fill="#00f" textLength="19.3" lengthAdjust="spacingAndGlyphs">0.0</text><rect x="1306.6" y="564.7" width="22.100000000000136" height="16" fill="#fff" /><text x="1308.0" y="578.5" font-family="Liberation Sans" font-size="15.5" fill="#f00" textLength="19.3" lengthAdjust="spacingAndGlyphs">0.0</text><rect x="1163" y="479" width="23" height="54" fill="#fff"/><text x="0" y="0" font-family="Liberation Sans" font-size="15" fill="#0a6a48" transform="translate(1168.5,481) rotate(90)">w</text><text x="0" y="0" font-family="Liberation Sans" font-size="15" fill="#0a6a48" transform="translate(1168.5,513) rotate(90)" textLength="19" lengthAdjust="spacingAndGlyphs">1-2</text><rect x="1166" y="495" width="21" height="16" fill="#fff" /><text x="1166.8000000000002" y="509.6" font-family="Liberation Sans" font-size="15.5" fill="#00f" textLength="19.1" lengthAdjust="spacingAndGlyphs">0.6</text><rect x="1000" y="744" width="27" height="16" fill="#fff" /><text x="1001.1" y="760.5" font-family="Liberation Sans" font-size="15.5" fill="#f00" textLength="24.8" lengthAdjust="spacingAndGlyphs">-0.6</text><rect x="1055" y="723" width="21" height="17" fill="#fff" /><text x="1056.1000000000001" y="739.0999999999999" font-family="Liberation Sans" font-size="15.5" fill="#00f" textLength="19.2" lengthAdjust="spacingAndGlyphs">0.4</text><rect x="1093" y="704" width="57" height="17" fill="#fff" /><text x="1097.7" y="720.5" font-family="Liberation Sans" font-size="15.5" fill="#0a6a48" textLength="51.2" lengthAdjust="spacingAndGlyphs">w 3-1-3</text><rect x="1283" y="649" width="21" height="17" fill="#fff" /><text x="1283.6000000000001" y="665.5" font-family="Liberation Sans" font-size="15.5" fill="#00f" textLength="18.7" lengthAdjust="spacingAndGlyphs">0.1</text><path d="M1250 669 L1258 677 M1258 669 L1250 677" stroke="#8a9ab0" stroke-width="1.1"/><rect x="517" y="634" width="22" height="17" fill="#fff" /><text x="518.6" y="650.4" font-family="Liberation Sans" font-size="15.5" fill="#00f" textLength="19.5" lengthAdjust="spacingAndGlyphs">0.7</text><rect x="567" y="656" width="26" height="17" fill="#fff" /><text x="567.4" y="672.1999999999999" font-family="Liberation Sans" font-size="15.5" fill="#f00" textLength="24.5" lengthAdjust="spacingAndGlyphs">-5.5</text><rect x="663" y="640" width="27" height="20" fill="#fff" /><text x="663.8" y="656.5999999999999" font-family="Liberation Sans" font-size="15.5" fill="#f00" textLength="25.5" lengthAdjust="spacingAndGlyphs">-4.0</text><rect x="605.5" y="680" width="36" height="22.5" fill="#fff" stroke="#f00" stroke-width="1"/><text x="606.4" y="696.4" font-family="Liberation Sans" font-size="15.5" fill="#f00" textLength="34.2" lengthAdjust="spacingAndGlyphs">-39.1</text><rect x="655" y="703" width="28" height="19" fill="#fff" /><text x="656.6999999999999" y="720.3" font-family="Liberation Sans" font-size="15.5" fill="#f00" textLength="25.2" lengthAdjust="spacingAndGlyphs">-5.5</text><rect x="785" y="690" width="27" height="20" fill="#fff" /><text x="786.0" y="706.6999999999999" font-family="Liberation Sans" font-size="15.5" fill="#f00" textLength="25.1" lengthAdjust="spacingAndGlyphs">-2.0</text><rect x="699" y="730" width="21" height="18" fill="#fff" /><text x="700.1" y="746.4" font-family="Liberation Sans" font-size="15.5" fill="#00f" textLength="18.9" lengthAdjust="spacingAndGlyphs">0.7</text><text x="511" y="650" font-family="Liberation Sans" font-size="12" fill="#9a8a6a">y</text><path d="M620 706 L630 702 M621 711 L629 707 M618 712 L626 710" stroke="#0a6a48" stroke-width="1.2"/><path d="M622 666 L632 663" stroke="#0a6a48" stroke-width="1.2"/><line x1="843.5" y1="355" x2="843.5" y2="811" stroke="#808080" stroke-width="1.3" stroke-dasharray="9 3 3 3"/></svg>
<div class="a" style="left:1726px;top:174px;width:188px;height:21px;background:#d3d3d3"></div>
<div class="t" style="left:1733.2px;top:175.68px;font-size:15.5px;color:#1a1a1a;transform:scaleX(0.7741);transform-origin:0 0;">CAD/BIM</div>
<div class="a" style="left:1726px;top:195px;width:188px;height:91px;background:#fff;border:1px solid #a0a0a0"></div>
<div class="a" style="left:1726px;top:295px;width:188px;height:21px;background:#d3d3d3"></div>
<div class="t" style="left:1733.2px;top:296.68px;font-size:15.5px;color:#1a1a1a;transform:scaleX(0.7501);transform-origin:0 0;">Estructura</div>
<div class="a" style="left:1726px;top:316px;width:188px;height:181px;background:#fff;border:1px solid #a0a0a0"></div>
<div class="a" style="left:1726px;top:506px;width:188px;height:21px;background:#d3d3d3"></div>
<div class="t" style="left:1733.2px;top:507.68px;font-size:15.5px;color:#1a1a1a;transform:scaleX(0.7205);transform-origin:0 0;">Cargas</div>
<div class="a" style="left:1726px;top:527px;width:188px;height:111px;background:#fff;border:1px solid #a0a0a0"></div>
<div class="a" style="left:1726px;top:647px;width:188px;height:21px;background:#d3d3d3"></div>
<div class="t" style="left:1733.2px;top:648.68px;font-size:15.5px;color:#1a1a1a;transform:scaleX(0.7195);transform-origin:0 0;">Malla EF</div>
<div class="a" style="left:1726px;top:668px;width:188px;height:31px;background:#fff;border:1px solid #a0a0a0"></div>
<div class="a" style="left:1726px;top:708px;width:188px;height:21px;background:#d3d3d3"></div>
<div class="t" style="left:1733.2px;top:709.68px;font-size:15.5px;color:#1a1a1a;transform:scaleX(0.7490);transform-origin:0 0;">Usuario</div>
<div class="a" style="left:1726px;top:729px;width:188px;height:31px;background:#fff;border:1px solid #a0a0a0"></div>
<div class="a" style="left:1726px;top:769px;width:188px;height:21px;background:#d3d3d3"></div>
<div class="t" style="left:1733.2px;top:770.68px;font-size:15.5px;color:#1a1a1a;transform:scaleX(0.7349);transform-origin:0 0;">Resultados</div>
<div class="a" style="left:1726px;top:790px;width:188px;height:32px;background:#fff;border:1px solid #a0a0a0"></div>
<div class="a" style="left:1726px;top:831px;width:188px;height:21px;background:#d3d3d3"></div>
<div class="t" style="left:1733.2px;top:832.68px;font-size:15.5px;color:#1a1a1a;transform:scaleX(0.7493);transform-origin:0 0;">Armadura</div>
<div class="a" style="left:1726px;top:852px;width:188px;height:31px;background:#fff;border:1px solid #a0a0a0"></div>
<div class="a" style="left:1726px;top:892px;width:188px;height:21px;background:#d3d3d3"></div>
<div class="t" style="left:1733.2px;top:893.68px;font-size:15.5px;color:#1a1a1a;transform:scaleX(0.7313);transform-origin:0 0;">Pretensado</div>
<div class="a" style="left:1726px;top:913px;width:188px;height:3px;background:#fff;border:1px solid #a0a0a0"></div>
<div class="a" style="left:1726px;top:924px;width:188px;height:21px;background:#d3d3d3"></div>
<div class="t" style="left:1733.2px;top:925.68px;font-size:15.5px;color:#1a1a1a;transform:scaleX(0.7901);transform-origin:0 0;">Editor</div>
<div class="a" style="left:1726px;top:945px;width:188px;height:32px;background:#fff;border:1px solid #a0a0a0"></div>
<svg class="a" style="left:1732px;top:200px;" width="22" height="22" viewBox="0 0 22 22"><g font-family="Liberation Sans" font-weight="bold" font-size="6.5" fill="#000"><text x="5" y="5.5">A</text><text x="14" y="5.5">B</text><text x="0" y="13">1</text><text x="0" y="20.5">2</text></g>
<g stroke="#f00" stroke-width="1.6"><path d="M5 10 L21 10 M5 14.5 L21 14.5 M5 19 L21 19 M7.5 7 L7.5 21.5 M12.5 7 L12.5 21.5 M17.5 7 L17.5 21.5"/></g></svg>
<div class="t" style="left:1764.5px;top:202.68px;font-size:15.5px;color:#000;transform:scaleX(0.8977);transform-origin:0 0;">Cx</div>
<div class="t" style="left:1796.5px;top:202.68px;font-size:15.5px;color:#000;transform:scaleX(0.9160);transform-origin:0 0;">Lx</div>
<div class="t" style="left:1827px;top:202.68px;font-size:15.5px;color:#000;transform:scaleX(0.9119);transform-origin:0 0;">Bx</div>
<svg class="a" style="left:1732px;top:230px;" width="22" height="22" viewBox="0 0 22 22"><g fill="none" stroke="#aaa" stroke-width="1.3"><path d="M1.5 3 L17.5 3 L17.5 20 L12 20 L12 9 L7 9 L7 20 L1.5 20 Z"/></g></svg>
<svg class="a" style="left:1763px;top:230px;" width="22" height="22" viewBox="0 0 22 22"><g fill="none" stroke="#aaa" stroke-width="1.3"><path d="M1.5 6 L1.5 20 L6 20 L6 13 L11 13 L11 20 L17.5 20 L17.5 8 L12 8 L12 3 L5 3 L5 6 Z"/></g></svg>
<svg class="a" style="left:1794px;top:230px;" width="22" height="22" viewBox="0 0 22 22"><g fill="none" stroke="#aaa" stroke-width="1.3"><path d="M1.5 6 L1.5 20 L6 20 L6 13 L11 13 L11 20 L17.5 20 L17.5 6 L14 6 M10 3 L16 10 M16 3 L10 10"/></g></svg>
<svg class="a" style="left:1825px;top:230px;" width="22" height="22" viewBox="0 0 22 22"><g fill="none" stroke="#aaa" stroke-width="1.3"><path d="M1.5 9 L1.5 22 L6 22 L6 14 L11 14 L11 22 L17.5 22 L17.5 9 L12 9 M2 3 L10 11 L7 11 M10 11 L10 8"/></g></svg>
<svg class="a" style="left:1856px;top:230px;" width="22" height="22" viewBox="0 0 22 22"><g fill="none" stroke="#aaa" stroke-width="1.3"><path d="M1.5 3 L19.5 3 L19.5 22 L15 22 L15 10 L6 10 L6 22 L1.5 22 Z M1.5 6.5 L19.5 6.5"/></g></svg>
<svg class="a" style="left:1887px;top:230px;" width="22" height="22" viewBox="0 0 22 22"><g fill="none" stroke="#aaa" stroke-width="1.3"><path d="M1.5 6 L1.5 20 L6 20 L6 13 L11 13 L11 20 L17.5 20 L17.5 6 L12 6 M9 14 L21 2 M18 2 L21 2 L21 5"/></g></svg>
<svg class="a" style="left:1732px;top:259px;" width="22" height="24" viewBox="0 0 22 24"><path d="M1.5 13 L5 7.5 L20.5 7.5 L17 13 Z" fill="#999"/><path d="M1.5 19.5 L5 14 L20.5 14 L17 19.5 Z" fill="#ccc"/>
<path d="M1.5 6.5 L5.5 1.2 L20.8 1.2 L17 6.5 Z" fill="#0000e0" stroke="#000" stroke-width="1.3"/>
<path d="M2 6.5 L2 23 M9.3 6.5 L9.3 23 M16.5 6.5 L16.5 23" stroke="#000" stroke-width="1.8"/><path d="M20.5 1.2 L20.5 17.5 L16.5 22" fill="none" stroke="#000" stroke-width="1.4"/>
<path d="M1.5 13 L17 13 M1.5 19.5 L17 19.5 M17 13 L20.5 8 M17 19.5 L20.5 14.5" stroke="#000" stroke-width="1"/></svg>
<svg class="a" style="left:1763px;top:259px;" width="22" height="24" viewBox="0 0 22 24"><path d="M1.5 13 L5 7.5 L20.5 7.5 L17 13 Z" fill="#999"/><path d="M1.5 19.5 L5 14 L20.5 14 L17 19.5 Z" fill="#0000d0"/>
<path d="M1.5 6.5 L5.5 1.2 L20.8 1.2 L17 6.5 Z" fill="#ddd" stroke="#000" stroke-width="1.3"/>
<path d="M2 6.5 L2 23 M9.3 6.5 L9.3 23 M16.5 6.5 L16.5 23" stroke="#000" stroke-width="1.8"/><path d="M20.5 1.2 L20.5 17.5 L16.5 22" fill="none" stroke="#000" stroke-width="1.4"/>
<path d="M1.5 13 L17 13 M1.5 19.5 L17 19.5 M17 13 L20.5 8 M17 19.5 L20.5 14.5" stroke="#000" stroke-width="1"/></svg>
<svg class="a" style="left:1794px;top:259px;" width="22" height="24" viewBox="0 0 22 24"><path d="M1.5 13 L5 7.5 L20.5 7.5 L17 13 Z" fill="#0000d0"/><path d="M1.5 19.5 L5 14 L20.5 14 L17 19.5 Z" fill="#ccc"/>
<path d="M1.5 6.5 L5.5 1.2 L20.8 1.2 L17 6.5 Z" fill="#ddd" stroke="#000" stroke-width="1.3"/>
<path d="M2 6.5 L2 23 M9.3 6.5 L9.3 23 M16.5 6.5 L16.5 23" stroke="#000" stroke-width="1.8"/><path d="M20.5 1.2 L20.5 17.5 L16.5 22" fill="none" stroke="#000" stroke-width="1.4"/>
<path d="M1.5 13 L17 13 M1.5 19.5 L17 19.5 M17 13 L20.5 8 M17 19.5 L20.5 14.5" stroke="#000" stroke-width="1"/></svg>
<svg class="a" style="left:1825px;top:259px;" width="22" height="24" viewBox="0 0 22 24"><path d="M1.5 13 L5 7.5 L20.5 7.5 L17 13 Z" fill="#f07010"/><path d="M1.5 19.5 L5 14 L20.5 14 L17 19.5 Z" fill="#107010"/>
<path d="M1.5 6.5 L5.5 1.2 L20.8 1.2 L17 6.5 Z" fill="#5050a0" stroke="#000" stroke-width="1.3"/>
<path d="M2 6.5 L2 23 M9.3 6.5 L9.3 23 M16.5 6.5 L16.5 23" stroke="#000" stroke-width="1.8"/><path d="M20.5 1.2 L20.5 17.5 L16.5 22" fill="none" stroke="#000" stroke-width="1.4"/>
<path d="M1.5 13 L17 13 M1.5 19.5 L17 19.5 M17 13 L20.5 8 M17 19.5 L20.5 14.5" stroke="#000" stroke-width="1"/></svg>
<div class="a" style="left:1727.4px;top:317.4px;width:29.5px;height:28px;background:#cce8ff;border:1px solid #99d1ff;border-radius:3px"></div>
<div class="a" style="left:1758.3px;top:317.4px;width:29.5px;height:28px;background:#cce8ff;border:1px solid #99d1ff;border-radius:3px"></div>
<div class="a" style="left:1758.3px;top:347.3px;width:29.5px;height:28px;background:#cce8ff;border:1px solid #99d1ff;border-radius:3px"></div>
<div class="a" style="left:1789.3px;top:347.3px;width:29.5px;height:28px;background:#cce8ff;border:1px solid #99d1ff;border-radius:3px"></div>
<div class="a" style="left:1758.3px;top:377.4px;width:29.5px;height:28px;background:#cce8ff;border:1px solid #99d1ff;border-radius:3px"></div>
<div class="a" style="left:1789.3px;top:377.4px;width:29.5px;height:28px;background:#cce8ff;border:1px solid #99d1ff;border-radius:3px"></div>
<div class="a" style="left:1820.2px;top:377.4px;width:29.5px;height:28px;background:#cce8ff;border:1px solid #99d1ff;border-radius:3px"></div>
<div class="a" style="left:1851.3px;top:377.4px;width:29.5px;height:28px;background:#cce8ff;border:1px solid #99d1ff;border-radius:3px"></div>
<div class="a" style="left:1727.4px;top:437.5px;width:29.5px;height:28px;background:#cce8ff;border:1px solid #99d1ff;border-radius:3px"></div>
<div class="a" style="left:1727.4px;top:467.4px;width:29.5px;height:28px;background:#cce8ff;border:1px solid #99d1ff;border-radius:3px"></div>
<svg class="a" style="left:1729.9px;top:319.4px;" width="24" height="24" viewBox="0 0 24 24"><path d="M2 2 L14 2 L21 9 L21 22 L2 22 Z" fill="#eee" stroke="#000" stroke-width="2"/></svg>
<svg class="a" style="left:1760.8px;top:319.4px;" width="24" height="24" viewBox="0 0 24 24"><path d="M2 2 L15 2 L21 8 L21 22 L2 22 Z" fill="#ddd" stroke="#999" stroke-width="1.2"/><path d="M3 3 L14 3 L20 9 L20 21 L3 21Z" fill="#fff"/><rect x="7" y="8" width="10" height="8" fill="#000"/><rect x="9.5" y="10.5" width="5" height="3" fill="#fff"/></svg>
<svg class="a" style="left:1729.9px;top:349.3px;" width="24" height="24" viewBox="0 0 24 24"><path d="M4 10 L4 2 M2 4 L4 1 L6 4 M4 8 L10 3 L20 3 M4 10 L20 10 M18 8 L21 10 L18 12" fill="none" stroke="#000" stroke-width="1.2"/><rect x="6" y="12" width="14" height="10" fill="#ee0" stroke="#000" stroke-width="1.2"/><path d="M7 15.5 L19 15.5 M7 18.5 L19 18.5 M13 13 L13 21" stroke="#000"/></svg>
<svg class="a" style="left:1760.8px;top:349.3px;" width="24" height="24" viewBox="0 0 24 24"><rect x="2" y="2" width="7" height="6" fill="#ee0" stroke="#000" stroke-width="1.2"/><rect x="14" y="15" width="7" height="6" fill="#ee0" stroke="#000" stroke-width="1.2"/><path d="M1 17 L7 17 L14 9 L21 9" fill="none" stroke="#000" stroke-width="1.8"/><path d="M4 5 L7 5 M16 18 L19 18" stroke="#000"/></svg>
<svg class="a" style="left:1791.8px;top:349.3px;" width="24" height="24" viewBox="0 0 24 24"><path d="M3 9 L7 4 L22 4 L18 9 Z" fill="#eee" stroke="#000" stroke-width="1.2"/><path d="M3 9 L18 9 L18 12 L3 12Z" fill="#999" stroke="#000"/><path d="M7 12 L12 12 L12 22 L7 22Z" fill="#ee0" stroke="#000"/><path d="M12 12 L16 12 L16 19 L12 22Z" fill="#cc0" stroke="#000"/><path d="M16 19 L22 16 L22 13 L16 15Z" fill="#aaa"/></svg>
<svg class="a" style="left:1822.7px;top:349.3px;" width="24" height="24" viewBox="0 0 24 24"><path d="M2 17 L8 11 L22 11 L16 17 Z" fill="#ddd" stroke="#000" stroke-width="1"/><path d="M2 17 L16 17 L16 19 L2 19Z" fill="#666"/><path d="M9 15.5 L13 12 L15 12 L11 15.5Z" fill="#ee0"/></svg>
<svg class="a" style="left:1729.9px;top:379.4px;" width="24" height="24" viewBox="0 0 24 24"><path d="M2 2 L16 2 M3 4 Q5 6 3 8 M7 4 Q9 6 7 8 M11 4 Q13 6 11 8" fill="none" stroke="#000" stroke-width="1.3"/><rect x="7" y="11" width="14" height="11" fill="#0dd" stroke="#000" stroke-width="1.2"/><path d="M8 15 L20 15 M8 18.5 L20 18.5 M14 12 L14 21" stroke="#000"/></svg>
<svg class="a" style="left:1760.8px;top:379.4px;" width="24" height="24" viewBox="0 0 24 24"><rect x="2" y="2" width="7" height="6" fill="#0dd" stroke="#000" stroke-width="1.2"/><rect x="14" y="15" width="7" height="6" fill="#0dd" stroke="#000" stroke-width="1.2"/><path d="M1 17 L7 17 L14 9 L21 9" fill="none" stroke="#000" stroke-width="1.8"/><path d="M4 5 L7 5 M16 18 L19 18" stroke="#000"/></svg>
<svg class="a" style="left:1791.8px;top:379.4px;" width="24" height="24" viewBox="0 0 24 24"><path d="M17 18 L22 15 L22 21 L17 22Z" fill="#ccc"/><path d="M8 4 L11 2 L14 2 L14 20 L11 22 L8 22Z" fill="#0dd" stroke="#000" stroke-width="1.2"/><path d="M11 2 L11 22" stroke="#000"/></svg>
<svg class="a" style="left:1822.7px;top:379.4px;" width="24" height="24" viewBox="0 0 24 24"><rect x="4" y="7" width="16" height="16" fill="#c87a3a"/><rect x="4" y="5" width="16" height="4" fill="#207020"/><rect x="9" y="3" width="6" height="18" fill="#8cc" opacity="0.8"/><ellipse cx="12" cy="3" rx="3" ry="1.5" fill="#0dd" stroke="#000"/><path d="M20 7 L22 5 L22 21 L20 23Z" fill="#a06030"/></svg>
<svg class="a" style="left:1853.8px;top:379.4px;" width="24" height="24" viewBox="0 0 24 24"><path d="M17 18 L23 14 L23 21 L17 22Z" fill="#aaa"/><path d="M6 6 L14 2 L19 2 L19 18 L11 22 L6 22Z" fill="#0aa" stroke="#000" stroke-width="1.2"/><path d="M6 6 L11 6 L11 22 M11 6 L19 2" fill="none" stroke="#000"/><rect x="6.5" y="6.5" width="4" height="15" fill="#0dd"/></svg>
<svg class="a" style="left:1884.5px;top:379.4px;" width="24" height="24" viewBox="0 0 24 24"><path d="M17 18 L23 14 L23 21 L17 22Z" fill="#aaa"/><path d="M6 6 L14 2 L19 2 L19 18 L11 22 L6 22Z" fill="#fff" stroke="#000" stroke-width="1.2"/><path d="M6 6 L11 6 L11 22 M11 6 L19 2" fill="none" stroke="#000"/></svg>
<svg class="a" style="left:1729.9px;top:409.4px;" width="24" height="24" viewBox="0 0 24 24"><path d="M1 12 L8 4 L22 4 L15 12Z" fill="#bbb" stroke="#000"/><path d="M1 12 L15 12 L15 16 L1 16Z" fill="#777" stroke="#000"/><path d="M15 12 L22 4 L22 7 L15 16Z" fill="#0dd" stroke="#000"/><path d="M13 22 L20 14 M13 14 L20 22 M16 15 L17 12 L18 15" stroke="#000" fill="none"/></svg>
<svg class="a" style="left:1760.8px;top:409.4px;" width="24" height="24" viewBox="0 0 24 24"><path d="M2 8 L6 4 L10 4 L10 20 L6 22 L2 22Z" fill="#0aa" stroke="#000"/><path d="M12 8 L16 4 L21 4 L21 18 L17 22 L12 22Z" fill="#0aa" stroke="#000"/><path d="M6 4 L16 4 M10 4 L10 12 L12 12" stroke="#000" fill="none"/><rect x="2.5" y="8" width="3.5" height="13" fill="#0dd"/><rect x="12.5" y="8" width="4" height="13" fill="#0dd"/></svg>
<svg class="a" style="left:1791.8px;top:409.4px;" width="24" height="24" viewBox="0 0 24 24"><rect x="1" y="12" width="22" height="11" fill="#888800"/><path d="M2 18 L8 13 L22 13 L16 18Z" fill="#ddd" stroke="#000"/><path d="M2 18 L16 18 L16 20 L2 20Z" fill="#777"/><rect x="9" y="0" width="4" height="15" fill="#ddd" stroke="#000"/></svg>
<svg class="a" style="left:1729.9px;top:439.5px;" width="24" height="24" viewBox="0 0 24 24"><path d="M2 22 L2 12 L8 6 L8 2 L22 2 L22 22 L12 22 L12 18 L18 18 L18 12 L12 12 L12 16 L8 16 L8 22Z" fill="#888" stroke="#000" stroke-width="1.2"/><path d="M8 6 L14 2 M12 12 L18 6" stroke="#ddd" stroke-width="1.5"/></svg>
<svg class="a" style="left:1760.8px;top:439.5px;" width="24" height="24" viewBox="0 0 24 24"><path d="M1 8 L23 8 L23 12 L14 12 L10 12 L1 12Z" fill="#888"/><path d="M4 4 L20 4 L14 10 L10 10Z" fill="#ddd" stroke="#000"/><rect x="10" y="10" width="4" height="12" fill="#0dd" stroke="#000"/></svg>
<svg class="a" style="left:1729.9px;top:469.4px;" width="24" height="24" viewBox="0 0 24 24"><circle cx="5" cy="5" r="2.5" fill="#fff" stroke="#000" stroke-width="1.3"/><circle cx="5" cy="17" r="2.5" fill="#fff" stroke="#000" stroke-width="1.3"/><path d="M7 6.5 L22 15 M7 15.5 L22 7" stroke="#000" stroke-width="1.6"/></svg>
<svg class="a" style="left:1760.8px;top:469.4px;" width="24" height="24" viewBox="0 0 24 24"><rect x="8" y="3" width="14" height="18" fill="#777"/><path d="M1 4 L8 4 M4.5 4 L4.5 11 M1 11 L8 11" stroke="#00a" stroke-width="2"/><g fill="#a00"><rect x="1" y="13" width="6" height="3"/><rect x="8" y="13" width="7" height="3"/><rect x="4" y="17" width="7" height="3"/><rect x="12" y="17" width="7" height="3"/><rect x="1" y="21" width="6" height="2.5"/><rect x="8" y="21" width="7" height="2.5"/></g></svg>
<div class="t" style="left:1732px;top:530.48px;font-size:15.5px;color:#000;transform:scaleX(0.7976);transform-origin:0 0;">PP</div>
<div class="t" style="left:1732px;top:552.48px;font-size:15.5px;color:#000;transform:scaleX(0.9119);transform-origin:0 0;">!Exp-G</div>
<div class="t" style="left:1732px;top:574.48px;font-size:15.5px;color:#000;transform:scaleX(0.8099);transform-origin:0 0;">SCU</div>
<div class="t" style="left:1732px;top:596.48px;font-size:15.5px;color:#000;transform:scaleX(0.9430);transform-origin:0 0;">!Exp-Q</div>
<div class="t" style="left:1732px;top:618.48px;font-size:15.5px;color:#000;transform:scaleX(0.8939);transform-origin:0 0;">HC</div>
<svg class="a" style="left:1730px;top:672px;" width="22" height="24" viewBox="0 0 22 24"><path d="M1 3 L20 3 M1 7 L20 7 M1 11 L20 11 M4 1 L4 13 M9 1 L9 13 M14 1 L14 13" stroke="#000" stroke-width="1.8"/><rect x="7" y="13" width="14" height="10" fill="#555" stroke="#000"/><path d="M8 16.5 L20 16.5 M8 19.5 L20 19.5 M14 14 L14 22" stroke="#ccc" stroke-width="0.8"/></svg>
<svg class="a" style="left:1761px;top:672px;" width="24" height="24" viewBox="0 0 24 24"><rect x="2" y="1" width="6" height="6" fill="#fff" stroke="#000" stroke-width="1.2"/><rect x="15" y="16" width="6" height="6" fill="#fff" stroke="#000" stroke-width="1.2"/><path d="M1 17 L7 17 L14 9 L21 9" fill="none" stroke="#000" stroke-width="2"/><path d="M3.5 4 L6.5 4 M16.5 19 L19.5 19" stroke="#000"/></svg>
<svg class="a" style="left:1792px;top:672px;" width="24" height="22" viewBox="0 0 24 22"><rect x="1" y="1" width="22" height="20" fill="#fff" stroke="#888" stroke-width="1.2"/><path d="M1 5 L23 5 M1 9 L23 9 M1 15 L23 15 M6 1 L6 9 M11 1 L11 9 M16 1 L16 9 M12 9 L12 21 M6 9 L6 21 M17 9 L17 21" stroke="#888"/><rect x="1" y="8" width="22" height="2.5" fill="#222"/></svg>
<svg class="a" style="left:1824px;top:673px;" width="24" height="22" viewBox="0 0 24 22"><rect x="1" y="1" width="22" height="20" fill="#fff" stroke="#aaa" stroke-width="1.2"/><path d="M1 5 L23 5 M1 9 L23 9 M1 15 L23 15 M6 1 L6 9 M11 1 L11 9 M16 1 L16 9 M12 9 L12 21 M6 9 L6 21 M17 9 L17 21" stroke="#aaa"/></svg>
<svg class="a" style="left:1732px;top:733px;" width="22" height="20" viewBox="0 0 22 20"><path d="M2 15 L5 10 L15 1 L19 5 L9 14 Z" fill="#ddd" stroke="#000" stroke-width="0.9"/><path d="M2 15 L5 10 L9 14Z" fill="#fff" stroke="#000" stroke-width="0.8"/><path d="M5 10 L15 1 L17 3 L7 12Z" fill="#aaa"/><path d="M3 18.5 L20 18.5" stroke="#000" stroke-width="1"/></svg>
<div class="a" style="left:1765px;top:791px;width:18px;height:29.5px;background:#cce8ff;border:1px solid #99d1ff;border-radius:3px"></div>
<div class="t" style="left:1728.5px;top:798.68px;font-size:15.5px;color:#000;transform:scaleX(0.9275);transform-origin:0 0;">10</div>
<div class="t" style="left:1747.5px;top:798.68px;font-size:15.5px;color:#000;transform:scaleX(0.9320);transform-origin:0 0;">11</div>
<div class="t" style="left:1765.8px;top:798.68px;font-size:15.5px;color:#000;transform:scaleX(0.9275);transform-origin:0 0;">12</div>
<svg class="a" style="left:1734px;top:858px;" width="18" height="21" viewBox="0 0 18 21"><rect x="1" y="1" width="5" height="19" fill="#e00"/><rect x="6" y="5" width="5" height="15" fill="#00e"/><rect x="11" y="14" width="5" height="5" fill="#666"/></svg>
<svg class="a" style="left:1762px;top:857px;" width="22" height="22" viewBox="0 0 22 22"><path d="M1.5 1.5 L14 1.5 L20.5 8 L20.5 20.5 L1.5 20.5Z" fill="#fff" stroke="#000" stroke-width="1.5"/><path d="M3 8 L14 8 L14 19" fill="none" stroke="#000" stroke-width="1" stroke-dasharray="1.5 1.2"/></svg>
<div class="a" style="left:1758px;top:946px;width:30px;height:29px;background:#cce8ff;border:1px solid #99d1ff;border-radius:3px"></div>
<svg class="a" style="left:1762px;top:951px;" width="22" height="18" viewBox="0 0 22 18"><circle cx="4" cy="3.5" r="2.5" fill="#fff" stroke="#000" stroke-width="1.3"/><circle cx="4" cy="14" r="2.5" fill="#fff" stroke="#000" stroke-width="1.3"/><path d="M6 5 L20.5 12.5 M6 12.5 L20.5 3.5" stroke="#000" stroke-width="1.6"/></svg>
<div class="a" style="left:0px;top:985px;width:1920px;height:35px;background:#fff"></div>
<div class="a" style="left:0px;top:985px;width:1915px;height:1px;background:#a0a0a0"></div>
<div class="a" style="left:0px;top:985px;width:1px;height:35px;background:#a0a0a0"></div>
<div class="a" style="left:272px;top:986px;width:1px;height:34px;background:#a0a0a0"></div>
<div class="a" style="left:447px;top:986px;width:1px;height:34px;background:#a0a0a0"></div>
<div class="t" style="left:18px;top:994.88px;font-size:15.5px;color:#222;transform:scaleX(0.9677);transform-origin:0 0;">x</div>
<div class="a" style="left:29px;top:990px;width:67px;height:24px;background:#fff;border:1px solid #c8c8c8;border-bottom:1px solid #888;border-radius:2px"></div>
<div class="t" style="left:31px;top:994.88px;font-size:15.5px;color:#000;transform:scaleX(0.9674);transform-origin:0 0;">9.25</div>
<div class="t" style="left:100px;top:994.88px;font-size:15.5px;color:#222;transform:scaleX(0.9685);transform-origin:0 0;">m</div>
<div class="t" style="left:151px;top:994.88px;font-size:15.5px;color:#222;transform:scaleX(0.9677);transform-origin:0 0;">y</div>
<div class="a" style="left:161px;top:990px;width:68px;height:24px;background:#fff;border:1px solid #c8c8c8;border-bottom:1px solid #888;border-radius:2px"></div>
<div class="t" style="left:164px;top:994.88px;font-size:15.5px;color:#000;transform:scaleX(0.9674);transform-origin:0 0;">15.42</div>
<div class="t" style="left:233px;top:994.88px;font-size:15.5px;color:#222;transform:scaleX(0.9685);transform-origin:0 0;">m</div>
</body></html>
